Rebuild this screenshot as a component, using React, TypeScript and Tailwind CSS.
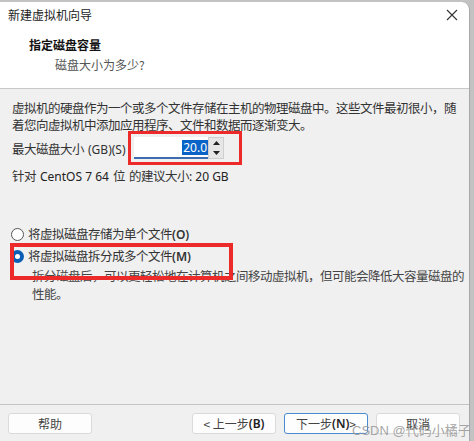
const cjk = "font-['Noto_Sans_CJK_SC','Noto_Sans',sans-serif]";
const latin = "font-['Noto_Sans',sans-serif] text-[12px] tracking-normal";

function CloseIcon() {
  return (
    <svg width="12" height="12" viewBox="0 0 12 12" fill="none" stroke="#333" strokeWidth="1.1">
      <path d="M1 1 L11 11 M11 1 L1 11" />
    </svg>
  );
}

function Radio({ checked }: { checked?: boolean }) {
  if (checked) {
    return (
      <span className="w-[13px] h-[13px] rounded-full bg-[#0a5fb4] flex items-center justify-center shrink-0">
        <span className="w-[5px] h-[5px] rounded-full bg-white" />
      </span>
    );
  }
  return <span className="w-[13px] h-[13px] rounded-full border border-[#555] bg-white shrink-0" />;
}

function Button({ children, focused }: { children: React.ReactNode; focused?: boolean }) {
  return (
    <div
      className={`w-[84px] h-[21px] rounded-[3px] bg-[#fdfdfd] flex items-center justify-center text-[12px] text-[#444] border ${
        focused ? 'border-[#4a8ad0]' : 'border-[#dadada]'
      }`}
    >
      {children}
    </div>
  );
}

export default function App() {
  return (
    <div className={`w-[474px] h-[441px] bg-[#c2c2c2] pt-[2px] pr-[4px] overflow-hidden ${cjk}`}>
      <div className="h-full bg-white rounded-tr-[8px] border-r border-[#a8a8a8] flex flex-col">
        {/* title bar */}
        <div className="h-[26px] shrink-0 flex items-center justify-between pl-[8px] pr-[11px]">
          <span className="text-[12px] text-[#222] leading-none">新建虚拟机向导</span>
          <CloseIcon />
        </div>

        {/* header */}
        <div className="h-[61px] shrink-0 pt-[7px] border-b border-[#c8c8c8]">
          <div className="pl-[29px] text-[12px] leading-[20px] font-bold text-[#111]">指定磁盘容量</div>
          <div className="pl-[55px] text-[12px] leading-[20px] text-[#555]">磁盘大小为多少?</div>
        </div>

        {/* body */}
        <div className="flex-1 bg-[#f0f0f0] px-[12px] pt-[10px] flex flex-col text-[12.5px] tracking-[-0.5px] text-[#333]">
          <div className="leading-[17px] whitespace-nowrap">
            <div>虚拟机的硬盘作为一个或多个文件存储在主机的物理磁盘中。这些文件最初很小，随</div>
            <div>着您向虚拟机中添加应用程序、文件和数据而逐渐变大。</div>
          </div>

          <div className="mt-[4px] h-[22px] flex items-center">
            <span className="w-[122px] shrink-0 mt-[3px] whitespace-nowrap">
              最大磁盘大小<span className={`${latin} ml-[4px]`}>(GB)(S)</span>
            </span>
            <div className="relative flex h-[22px]">
              <div className="w-[74px] h-full bg-white border-b-2 border-[#3d6db0] flex items-center justify-end">
                <span className={`bg-[#0a64c8] text-white ${latin} leading-[15px] px-[1px]`}>20.0</span>
              </div>
              <div className="w-[16px] h-full bg-[#e6e6e6] border border-[#cfcfcf] flex flex-col items-center justify-around">
                <svg width="7" height="4" viewBox="0 0 7 4">
                  <path d="M0 4 L3.5 0 L7 4 Z" fill="#222" />
                </svg>
                <svg width="7" height="4" viewBox="0 0 7 4">
                  <path d="M0 0 L3.5 4 L7 0 Z" fill="#222" />
                </svg>
              </div>
              <div className="absolute left-[-6px] top-[-6px] w-[114px] h-[34px] border-[3px] border-[#ec2a2a]" />
            </div>
          </div>

          <div className="mt-[8px] leading-[17px] whitespace-nowrap">
            针对<span className={`${latin} text-[#222] mx-[4px]`}>CentOS 7 64</span>位<span className="ml-[4px]">的建议大小</span>
            <span className={`${latin} text-[#222]`}>: 20 GB</span>
          </div>

          <div className="mt-[39px] h-[20px] flex items-center gap-[4px] ml-[-1px]">
            <Radio />
            <span className="whitespace-nowrap">
              将虚拟磁盘存储为单个文件<span className={`${latin} font-semibold`}>(O)</span>
            </span>
          </div>

          <div className="relative mt-[2px] h-[20px] flex items-center gap-[4px] ml-[-1px]">
            <Radio checked />
            <span className="whitespace-nowrap">
              将虚拟磁盘拆分成多个文件<span className={`${latin} font-semibold`}>(M)</span>
            </span>
            <div className="absolute left-[-1px] top-[-3px] w-[223px] h-[37px] border-[4px] border-[#ec2a2a]" />
          </div>

          <div className="mt-[1px] pl-[20px] leading-[18px] text-[#444] whitespace-nowrap">
            <div>拆分磁盘后，可以更轻松地在计算机之间移动虚拟机，但可能会降低大容量磁盘的</div>
            <div>性能。</div>
          </div>
        </div>

        {/* footer */}
        <div className="relative h-[37px] shrink-0 bg-[#f0f0f0] border-t border-[#c4c4c4] pt-[8px] pl-[8px] pr-[9px] flex items-start">
          <Button>帮助</Button>
          <div className="flex-1" />
          <div className="flex gap-[8px]">
            <Button>
              &lt; 上一步<span className="font-['Noto_Sans',sans-serif] font-semibold text-[#222]">(B)</span>
            </Button>
            <Button focused>
              下一步<span className="font-['Noto_Sans',sans-serif] font-semibold text-[#222]">(N)</span> &gt;
            </Button>
            <Button>取消</Button>
          </div>
          <span className="absolute left-[352px] top-[16px] text-[13px] leading-[18px] text-[#9a9a9a]/90 whitespace-nowrap">
            <span className="font-['Liberation_Sans',sans-serif]">CSDN @</span>代码小橘子
          </span>
        </div>
      </div>
    </div>
  );
}
